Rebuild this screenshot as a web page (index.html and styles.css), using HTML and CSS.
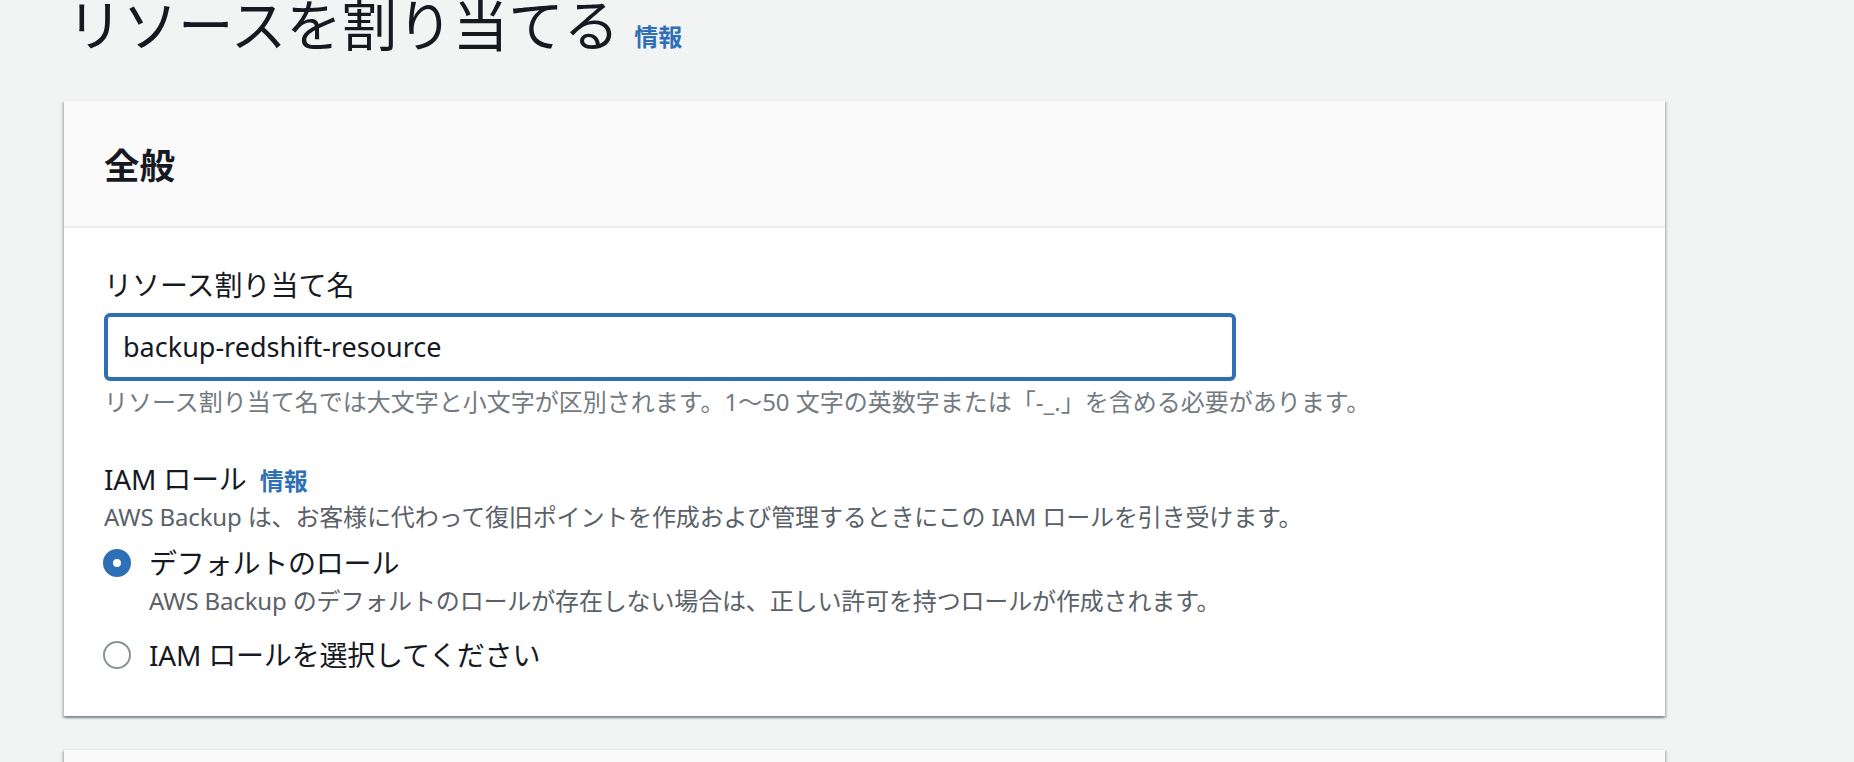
FILE: index.html
```html
<!DOCTYPE html>
<html lang="ja">
<head>
<meta charset="utf-8">
<title>リソースを割り当てる</title>
<link rel="stylesheet" href="styles.css">
</head>
<body>
<main class="page">
  <header class="page-header">
    <h1 class="page-title">リソースを割り当てる</h1>
    <a class="info-link title-info" href="#">情報</a>
  </header>

  <section class="card">
    <div class="card-header">
      <h2 class="card-title">全般</h2>
    </div>
    <div class="card-body">
      <div class="field">
        <label class="field-label" for="name">リソース割り当て名</label>
        <div class="input-box">
          <span class="input-value" id="name">backup-redshift-resource</span>
        </div>
        <p class="field-hint">リソース割り当て名では大文字と小文字が区別されます。1〜50 文字の英数字または「-_.」を含める必要があります。</p>
      </div>

      <div class="field field-role">
        <div class="field-label-row">
          <span class="field-label">IAM ロール</span>
          <a class="info-link" href="#">情報</a>
        </div>
        <p class="field-desc">AWS Backup は、お客様に代わって復旧ポイントを作成および管理するときにこの IAM ロールを引き受けます。</p>
        <div class="radio-group">
          <div class="radio-item">
            <span class="radio radio-checked"></span>
            <div class="radio-text">
              <span class="radio-label">デフォルトのロール</span>
              <span class="radio-desc">AWS Backup のデフォルトのロールが存在しない場合は、正しい許可を持つロールが作成されます。</span>
            </div>
          </div>
          <div class="radio-item radio-item-second">
            <span class="radio"></span>
            <div class="radio-text">
              <span class="radio-label">IAM ロールを選択してください</span>
            </div>
          </div>
        </div>
      </div>
    </div>
  </section>

  <section class="card card-next">
    <div class="card-header card-header-next"></div>
  </section>
</main>
</body>
</html>
```

FILE: styles.css
```css
* {
  box-sizing: border-box;
}

html, body {
  margin: 0;
  padding: 0;
  height: 100%;
  overflow: hidden;
}

body {
  background: #f2f3f3;
  font-family: "Noto Sans", "Noto Sans CJK JP", sans-serif;
  color: #16191f;
}

.page {
  padding-left: 64px;
  width: 1665px;
}

.page-header {
  display: flex;
  align-items: baseline;
  gap: 15px;
  margin-top: -13px;
  padding-left: 3px;
  height: 68px;
}

.page-title {
  margin: 0;
  font-size: 55.5px;
  line-height: 70px;
  font-weight: 400;
  color: #16191f;
  font-family: "Noto Sans CJK JP", sans-serif;
}

.info-link {
  font-family: "Noto Sans CJK JP", sans-serif;
  font-weight: 700;
  color: #2f6fb6;
  text-decoration: none;
  font-size: 24px;
}

.card {
  margin-top: 45px;
  background: #ffffff;
  box-shadow: 0 2px 2px 0 rgba(0, 28, 36, 0.3), 2px 2px 2px 0 rgba(0, 28, 36, 0.15), -2px 2px 2px 0 rgba(0, 28, 36, 0.15);
  border-top: 1px solid #eaeded;
}

.card-header {
  background: #fafafa;
  height: 127px;
  border-bottom: 2px solid #eaeded;
  display: flex;
  align-items: center;
  padding-left: 40px;
}

.card-title {
  margin: 0;
  font-family: "Noto Sans CJK JP", sans-serif;
  font-size: 35.5px;
  font-weight: 700;
  line-height: 44px;
}

.card-body {
  padding: 38px 40px 42px 40px;
}

.field-label {
  display: block;
  font-size: 28px;
  line-height: 38px;
  color: #16191f;
}

.input-box {
  margin-top: 9px;
  width: 1132px;
  height: 68px;
  border: 4px solid #2f6fb6;
  border-radius: 6px;
  display: flex;
  align-items: center;
  padding-left: 15px;
}

.input-value {
  font-size: 27px;
  color: #16191f;
  line-height: 38px;
}

.field-hint {
  margin: 5px 0 0 0;
  font-size: 24px;
  line-height: 32px;
  color: #737a81;
}

.field-role {
  margin-top: 42px;
}

.field-label-row {
  display: flex;
  align-items: baseline;
  gap: 13px;
}

.field-label-row .field-label {
  display: inline;
  letter-spacing: -0.2px;
}

.field-desc {
  margin: 3px 0 0 0;
  font-size: 24px;
  line-height: 32px;
  color: #5a6168;
  letter-spacing: -0.15px;
}

.radio-group {
  margin-top: 11px;
  display: flex;
  flex-direction: column;
  gap: 19px;
}

.radio-item {
  display: flex;
  align-items: flex-start;
  gap: 18px;
}

.radio {
  flex: none;
  width: 28px;
  height: 28px;
  margin-top: 5px;
  margin-left: -1px;
  border-radius: 50%;
  background: #ffffff;
  border: 2px solid #879596;
}

.radio-checked {
  border: 10px solid #2f6fb6;
}

.radio-text {
  display: flex;
  flex-direction: column;
  gap: 3px;
}

.radio-label {
  font-size: 28px;
  line-height: 38px;
  color: #16191f;
  letter-spacing: -0.2px;
}

.radio-desc {
  font-size: 24px;
  line-height: 32px;
  color: #5a6168;
  letter-spacing: -0.15px;
}

.card-next {
  margin-top: 33px;
}

.card-header-next {
  height: 100px;
  border-bottom: none;
}
```
